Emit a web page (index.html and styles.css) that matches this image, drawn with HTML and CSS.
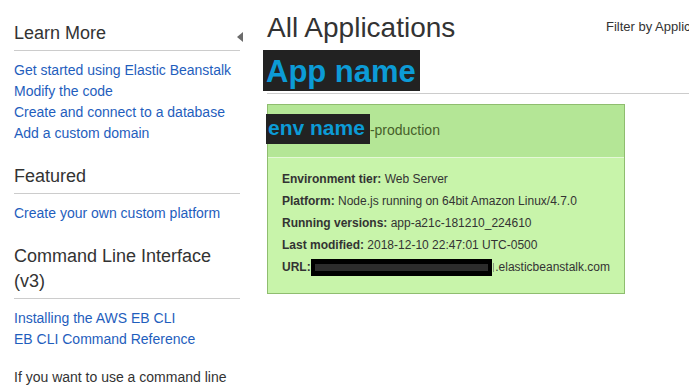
FILE: index.html
```html
<!DOCTYPE html>
<html lang="en">
<head>
    <meta charset="UTF-8">
    <meta name="viewport" content="width=device-width, initial-scale=1.0">
    <title>All Applications - Elastic Beanstalk</title>
    <link rel="stylesheet" href="styles.css">
</head>
<body>
    <div class="sidebar">
        <div class="side-heading with-toggle">
            <span>Learn More</span>
            <span class="collapse-arrow"></span>
        </div>
        <ul class="side-links">
            <li><a href="#">Get started using Elastic Beanstalk</a></li>
            <li><a href="#">Modify the code</a></li>
            <li><a href="#">Create and connect to a database</a></li>
            <li><a href="#">Add a custom domain</a></li>
        </ul>

        <div class="side-heading">Featured</div>
        <ul class="side-links">
            <li><a href="#">Create your own custom platform</a></li>
        </ul>

        <div class="side-heading">Command Line Interface (v3)</div>
        <ul class="side-links">
            <li><a href="#">Installing the AWS EB CLI</a></li>
            <li><a href="#">EB CLI Command Reference</a></li>
        </ul>

        <p class="side-note">If you want to use a command line interface to create and manage applications, use the EB CLI.</p>
    </div>

    <div class="main">
        <div class="page-header">
            <h1 class="page-title">All Applications</h1>
            <div class="filter">Filter by Application name</div>
        </div>

        <div class="app-section">
            <span class="redacted app-name">App name</span>
        </div>

        <div class="env-card">
            <div class="env-header">
                <span class="redacted env-name">env name</span>
                <span class="env-suffix">-production</span>
            </div>
            <div class="env-body">
                <div class="env-row"><b>Environment tier:</b> Web Server</div>
                <div class="env-row"><b>Platform:</b> Node.js running on 64bit Amazon Linux/4.7.0</div>
                <div class="env-row"><b>Running versions:</b> app-a21c-181210_224610</div>
                <div class="env-row"><b>Last modified:</b> 2018-12-10 22:47:01 UTC-0500</div>
                <div class="env-row url-row"><b>URL:</b><span class="url-mask"><span class="url-bar"></span></span><span class="url-sliver"></span>.elasticbeanstalk.com</div>
            </div>
        </div>
    </div>
</body>
</html>
```

FILE: styles.css
```css
html, body {
    overflow: hidden;
}

body {
    display: flex;
    height: 387px;
    margin: 0;
    font-family: "Liberation Sans", Arial, sans-serif;
    background: #fff;
    color: #333;
}

.sidebar {
    flex: none;
    width: 226px;
    margin-left: 14px;
    padding-top: 21px;
}

.side-heading {
    font-size: 18px;
    line-height: 25px;
    padding-bottom: 4px;
    border-bottom: 1px solid #ccc;
    margin-top: 20px;
}

.side-heading.with-toggle {
    display: flex;
    justify-content: space-between;
    margin-top: 0;
}

.collapse-arrow {
    width: 0;
    height: 0;
    margin-top: 11px;
    margin-right: -3px;
    border-top: 5.5px solid transparent;
    border-bottom: 5.5px solid transparent;
    border-right: 6px solid #6b6b6b;
}

.side-links {
    list-style: none;
    padding: 0;
    margin: 9px 0 0 0;
    font-size: 14px;
    line-height: 21px;
}

.side-links a {
    color: #1f5ebd;
    text-decoration: none;
}

.side-note {
    margin: 17px 0 0 0;
    font-size: 14px;
    line-height: 21px;
}

.main {
    flex: 1;
    min-width: 0;
    margin-left: 27px;
    padding-top: 12px;
}

.page-header {
    display: flex;
    align-items: flex-start;
}

.page-title {
    flex: none;
    width: 339px;
    margin: 0;
    font-size: 28px;
    line-height: 32px;
    font-weight: normal;
    color: #333;
}

.filter {
    flex: none;
    margin-top: 7px;
    font-size: 13px;
    line-height: 16px;
    white-space: nowrap;
}

.redacted {
    background: #222;
    color: #0c9bd6;
    font-weight: bold;
}

.app-section {
    margin-top: 6px;
    padding-bottom: 2px;
    border-bottom: 1px solid #ccc;
}

.app-name {
    display: inline-block;
    margin-left: -4px;
    padding: 4px 4px 1px 3px;
    font-size: 31px;
    line-height: 36px;
}

.env-card {
    width: 358px;
    box-sizing: border-box;
    margin-top: 10px;
    border: 1px solid #8fbd6f;
    background: #c8f4aa;
}

.env-header {
    display: flex;
    align-items: baseline;
    padding: 9px 0 13px 0;
    background: #b4e696;
}

.env-name {
    display: inline-block;
    margin-left: -2px;
    padding: 2px 5px 4px 2px;
    font-size: 21px;
    line-height: 24px;
}

.env-suffix {
    font-size: 14px;
    color: #46602a;
}

.env-body {
    border-top: 1px solid #e4f8d6;
    padding: 10px 14px 15px 14px;
    font-size: 12px;
    line-height: 22px;
}

.env-row {
    white-space: nowrap;
}

.url-row {
    display: flex;
    align-items: center;
}

.url-mask {
    display: inline-block;
    width: 185px;
    height: 7px;
    padding: 5px 4px;
    background: #000;
}

.url-bar {
    display: block;
    height: 7px;
    background: #2c2c2c;
}

.url-sliver {
    display: inline-block;
    width: 1px;
    height: 9px;
    margin: 0 1px 0 1px;
    background: #8a9a80;
}
```
